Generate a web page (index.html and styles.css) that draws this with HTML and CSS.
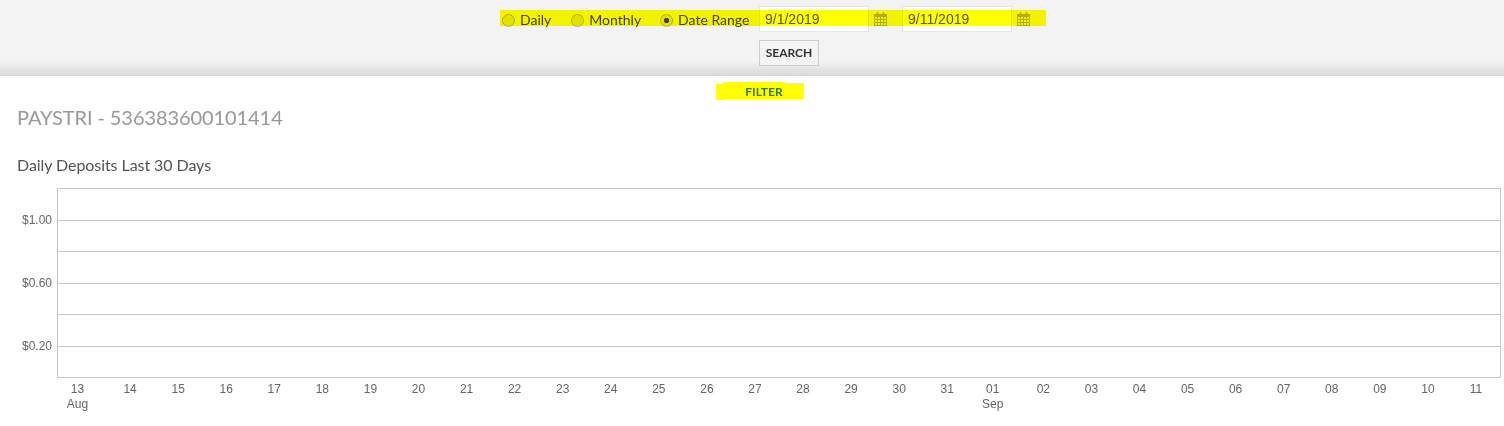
FILE: index.html
```html
<!DOCTYPE html>
<html>
<head>
    <title>Daily Deposits</title>
    <link rel="stylesheet" href="styles.css">
</head>
<body>
    <form class="filter-panel">
        <div class="range-types">
            <label class="range-type"><input type="radio" name="range"> Daily</label>
            <label class="range-type"><input type="radio" name="range"> Monthly</label>
            <label class="range-type"><input type="radio" name="range" checked> Date Range</label>
        </div>
        <div class="dates">
            <input class="date-input" type="text" value="9/1/2019">
            <svg class="cal-icon" viewBox="0 0 13 14"><path fill-rule="evenodd" d="M0 2h2.5V0.5h2V2h4V0.5h2V2H13v12H0zM1 5v2h2V5zm3 0v2h2V5zm3 0v2h2V5zm3 0v2h2V5zM1 8v2h2V8zm3 0v2h2V8zm3 0v2h2V8zm3 0v2h2V8zM1 11v2h2v-2zm3 0v2h2v-2zm3 0v2h2v-2zm3 0v2h2v-2z"/></svg>
            <input class="date-input" type="text" value="9/11/2019">
            <svg class="cal-icon" viewBox="0 0 13 14"><path fill-rule="evenodd" d="M0 2h2.5V0.5h2V2h4V0.5h2V2H13v12H0zM1 5v2h2V5zm3 0v2h2V5zm3 0v2h2V5zm3 0v2h2V5zM1 8v2h2V8zm3 0v2h2V8zm3 0v2h2V8zm3 0v2h2V8zM1 11v2h2v-2zm3 0v2h2v-2zm3 0v2h2v-2zm3 0v2h2v-2z"/></svg>
        </div>
        <button class="search-btn" type="button">SEARCH</button>
    </form>

    <div class="filter-toggle"><a href="#">FILTER</a></div>

    <main class="content">
        <h2 class="account-title">PAYSTRI - 536383600101414</h2>
        <h3 class="chart-title">Daily Deposits Last 30 Days</h3>

        <div class="chart">
            <div class="y-axis">
                <span>$1.00</span>
                <span>$0.60</span>
                <span>$0.20</span>
            </div>
            <div class="plot">
                <div class="plot-row"></div>
                <div class="plot-row"></div>
                <div class="plot-row"></div>
                <div class="plot-row"></div>
                <div class="plot-row"></div>
                <div class="plot-row"></div>
            </div>
            <div class="x-axis">
                <div class="tick tick-month">13<br>Aug</div>
                <div class="tick">14</div>
                <div class="tick">15</div>
                <div class="tick">16</div>
                <div class="tick">17</div>
                <div class="tick">18</div>
                <div class="tick">19</div>
                <div class="tick">20</div>
                <div class="tick">21</div>
                <div class="tick">22</div>
                <div class="tick">23</div>
                <div class="tick">24</div>
                <div class="tick">25</div>
                <div class="tick">26</div>
                <div class="tick">27</div>
                <div class="tick">28</div>
                <div class="tick">29</div>
                <div class="tick">30</div>
                <div class="tick">31</div>
                <div class="tick tick-month">01<br>Sep</div>
                <div class="tick">02</div>
                <div class="tick">03</div>
                <div class="tick">04</div>
                <div class="tick">05</div>
                <div class="tick">06</div>
                <div class="tick">07</div>
                <div class="tick">08</div>
                <div class="tick">09</div>
                <div class="tick">10</div>
                <div class="tick">11</div>
            </div>
        </div>
    </main>

    <!-- marker strokes drawn over the screenshot -->
    <div class="marker marker-range"></div>
    <div class="marker marker-filter"></div>
</body>
</html>
```

FILE: styles.css
```css
body {
    margin: 0;
    padding: 0;
    font-family: 'Lato', sans-serif;
    background: #fff;
    color: #333;
    overflow: hidden;
}

.filter-panel {
    display: grid;
    grid-template-columns: 257px auto;
    grid-template-rows: 26px 26px;
    row-gap: 8px;
    justify-content: start;
    box-sizing: border-box;
    height: 76px;
    padding: 6px 0 0 502px;
    background: linear-gradient(to bottom, #f3f3f3 62px, #e9e9e9 66px, #d9d9d9 76px);
}

.range-types {
    display: flex;
    align-items: center;
    gap: 19px;
}

.range-type {
    display: flex;
    align-items: center;
    gap: 5px;
    font-size: 14px;
    color: #444;
}

.range-type:first-child {
    margin-right: 1px;
}

.range-type input {
    appearance: none;
    box-sizing: border-box;
    width: 13px;
    height: 13px;
    margin: 3px 0 0;
    border: 1px solid #b0b0b0;
    border-radius: 50%;
    background: #e2e2e2;
}

.range-type input:checked {
    background: radial-gradient(circle, #444 0 2.5px, #e2e2e2 3px);
}

.dates {
    display: flex;
    align-items: center;
}

.date-input {
    box-sizing: border-box;
    width: 110px;
    height: 26px;
    padding: 0 5px;
    border: 1px solid #e6e6e6;
    background: #fff;
    font-family: 'Liberation Sans', sans-serif;
    font-size: 14px;
    color: #555;
    outline: none;
}

.cal-icon {
    width: 13px;
    height: 14px;
    margin: 0 15px 0 5px;
    fill: #b0b0b0;
}

.search-btn {
    grid-column: 2;
    justify-self: start;
    box-sizing: border-box;
    width: 60px;
    height: 26px;
    padding: 0 0 2px;
    border: 1px solid #ccc;
    background: #f4f4f4;
    font-family: 'Lato', sans-serif;
    font-size: 12px;
    font-weight: bold;
    color: #333;
}

.filter-toggle {
    height: 32px;
    line-height: 32px;
    text-align: center;
    font-size: 12px;
    font-weight: bold;
    margin-left: 24px;
}

.filter-toggle a {
    color: #337ab7;
    text-decoration: none;
}

.content {
    padding: 0 3px 0 17px;
}

.account-title {
    margin: -1px 0 0;
    font-size: 20px;
    font-weight: normal;
    line-height: 20px;
    letter-spacing: -0.08px;
    color: #999;
}

.chart-title {
    margin: 28px 0 0;
    font-size: 16px;
    font-weight: normal;
    line-height: 20px;
    letter-spacing: -0.07px;
    color: #555;
}

.chart {
    display: grid;
    grid-template-columns: 40px 1fr;
    margin-top: 13px;
    font-family: 'Liberation Sans', sans-serif;
    font-size: 12px;
    color: #666;
}

.y-axis {
    display: grid;
    grid-template-rows: repeat(3, 1fr);
    align-items: center;
    padding: 1px 5px 1px 0;
    text-align: right;
}

.plot {
    display: flex;
    flex-direction: column;
    box-sizing: border-box;
    height: 190px;
    border: 1px solid #c8c8c8;
}

.plot-row {
    flex: 1;
    border-bottom: 1px solid #c8c8c8;
}

.plot-row:last-child {
    border-bottom: none;
}

.x-axis {
    grid-column: 2;
    display: grid;
    grid-template-columns: repeat(30, 1fr);
    padding: 4px 1px 0;
    line-height: 15px;
    text-align: center;
}

.tick-month {
    margin-left: -5px;
}

.tick-month:first-child {
    margin-left: -9px;
}

/* multiply keeps the text under the stroke readable */
.marker {
    position: absolute;
    background: #ff0;
    mix-blend-mode: multiply;
}

.marker-range {
    left: 500px;
    top: 10px;
    width: 546px;
    height: 16px;
}

.marker-filter {
    left: 716px;
    top: 82px;
    width: 88px;
    height: 18px;
    clip-path: polygon(0 2px, 7px 2px, 7px 0, 69px 0, 69px 1px, 88px 1px, 88px 17px, 9px 17px, 9px 18px, 0 18px);
}
```
